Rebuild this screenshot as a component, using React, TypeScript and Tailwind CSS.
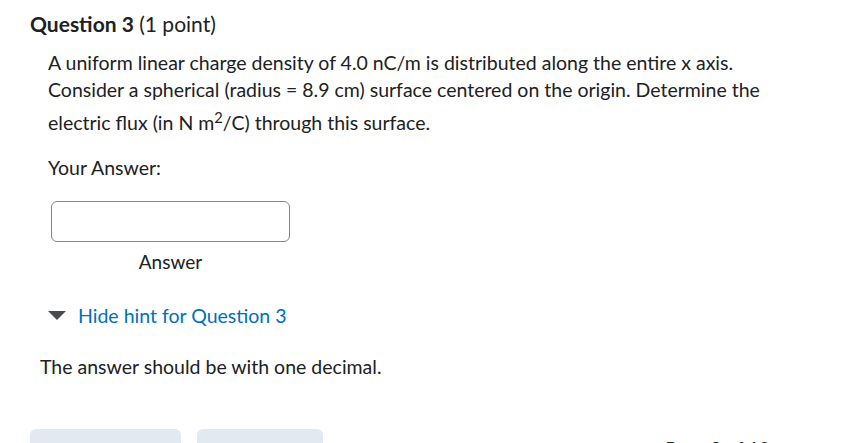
import React from 'react';

const App: React.FC = () => {
    return (
        <div className="w-[867px] h-[443px] overflow-hidden bg-white text-[#202122] font-['Lato','Noto_Sans',sans-serif]">
            <div className="pl-[30px] pt-[10px]">
                <h2 className="text-[21px] leading-[28px]">
                    <span className="font-bold">Question 3</span> (1 point)
                </h2>

                <div className="pl-[18px] pt-[11px]">
                    <p className="text-[19.5px] leading-[27px] w-[760px]">
                        <span className="block">A uniform linear charge density of 4.0 nC/m is distributed along the entire x axis.</span>
                        <span className="block">Consider a spherical (radius = 8.9 cm) surface centered on the origin. Determine the</span>
                        <span className="block mt-[6px]">electric flux (in N m<sup>2</sup>/C) through this surface.</span>
                    </p>

                    <p className="text-[19.5px] leading-[26px] mt-[19px]">Your Answer:</p>

                    <div className="mt-[20px] ml-[3px] flex flex-col items-center w-[239px]">
                        <input
                            type="text"
                            aria-label="Answer"
                            className="w-[239px] h-[41px] rounded-[6px] border border-[#868686] bg-white"
                        />
                        <span className="text-[19px] leading-[24px] mt-[8px]">Answer</span>
                    </div>

                    <button className="flex items-center gap-[12px] mt-[29px] text-[#006fbf] text-[19.5px] leading-[26px]">
                        <svg width="18" height="10" viewBox="0 0 18 10" className="fill-[#494c4e]">
                            <path d="M0 0 H18 L9 9 Z" />
                        </svg>
                        Hide hint for Question 3
                    </button>
                </div>

                <p className="pl-[10px] mt-[25px] text-[19.5px] leading-[26px]">The answer should be with one decimal.</p>

                <div className="flex items-start mt-[49px]">
                    <div className="w-[151px] h-[30px] rounded-t-[6px] bg-[#e3e9f1]" />
                    <div className="w-[126px] h-[30px] rounded-t-[6px] bg-[#e3e9f1] ml-[16px]" />
                    <span className="ml-auto mr-[97px] text-[19px] leading-[20px] pt-[10px]">Page 3 of 10</span>
                </div>
            </div>
        </div>
    );
};

export default App;
